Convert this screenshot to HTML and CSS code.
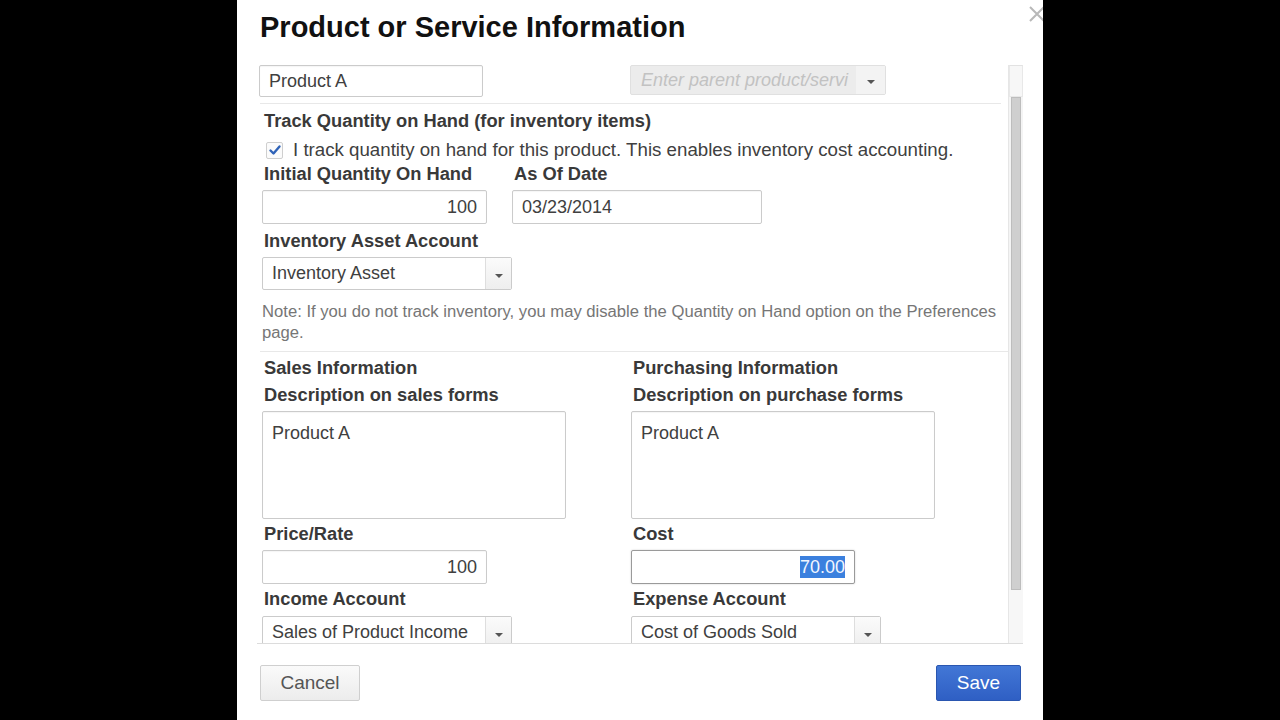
FILE: index.html
```html
<!DOCTYPE html>
<html lang="en">
<head>
<meta charset="utf-8">
<title>Product or Service Information</title>
<link rel="stylesheet" href="styles.css">
</head>
<body>
<div class="dialog">
  <header class="dlg-head">
    <h1 class="dlg-title">Product or Service Information</h1>
    <button class="close" aria-label="Close">
      <svg width="18" height="18" viewBox="0 0 18 18"><path d="M2 2 L16 16 M16 2 L2 16" stroke="#b8b8b8" stroke-width="2" fill="none"/></svg>
    </button>
  </header>

  <div class="scroll-area">
    <div class="content">
      <div class="row-top">
        <div class="field name-field">Product A</div>
        <div class="parent-field">
          <span class="parent-ph">Enter parent product/servi</span>
          <span class="parent-btn"><span class="caret"></span></span>
        </div>
      </div>
      <div class="sep sep-1"></div>

      <div class="label heading-track">Track Quantity on Hand (for inventory items)</div>
      <div class="check-line">
        <span class="checkbox">
          <svg width="14" height="14" viewBox="0 0 14 14"><path d="M2.5 7.5 L5.5 10.5 L11.5 3.5" stroke="#2f63b8" stroke-width="2.4" fill="none" stroke-linecap="round" stroke-linejoin="round"/></svg>
        </span>
        <span class="check-text">I track quantity on hand for this product. This enables inventory cost accounting.</span>
      </div>

      <div class="qty-grid">
        <div class="label">Initial Quantity On Hand</div>
        <div class="label">As Of Date</div>
        <div class="field num qty-input">100</div>
        <div class="field date-input">03/23/2014</div>
      </div>

      <div class="label label-asset">Inventory Asset Account</div>
      <div class="select asset-select">
        <span class="select-text">Inventory Asset</span>
        <span class="select-btn"><span class="caret"></span></span>
      </div>

      <p class="note">Note: If you do not track inventory, you may disable the Quantity on Hand option on the Preferences page.</p>
      <div class="sep sep-2"></div>

      <div class="two-col">
        <div class="col">
          <div class="label sec-head">Sales Information</div>
          <div class="label sub">Description on sales forms</div>
          <div class="field textarea">Product A</div>
          <div class="label lbl-price">Price/Rate</div>
          <div class="field num amount-input">100</div>
          <div class="label lbl-acct">Income Account</div>
          <div class="select acct-select">
            <span class="select-text">Sales of Product Income</span>
            <span class="select-btn"><span class="caret"></span></span>
          </div>
        </div>
        <div class="col">
          <div class="label sec-head">Purchasing Information</div>
          <div class="label sub">Description on purchase forms</div>
          <div class="field textarea">Product A</div>
          <div class="label lbl-price">Cost</div>
          <div class="field num amount-input cost-input focused"><span class="sel">70.00</span></div>
          <div class="label lbl-acct">Expense Account</div>
          <div class="select acct-select">
            <span class="select-text">Cost of Goods Sold</span>
            <span class="select-btn"><span class="caret"></span></span>
          </div>
        </div>
      </div>
    </div>

    <div class="scrollbar">
      <div class="sb-top"></div>
      <div class="sb-thumb"></div>
      <div class="sb-bottom"></div>
    </div>
  </div>

  <footer class="dlg-foot">
    <button class="btn btn-cancel">Cancel</button>
    <button class="btn btn-save">Save</button>
  </footer>
</div>
</body>
</html>
```

FILE: styles.css
```css
* { box-sizing: border-box; }

html, body {
  margin: 0;
  padding: 0;
  height: 100%;
}

body {
  background: #000;
  display: flex;
  justify-content: center;
  font-family: "Liberation Sans", Arial, Helvetica, sans-serif;
  color: #393939;
}

.dialog {
  width: 806px;
  height: 720px;
  background: #fff;
  display: flex;
  flex-direction: column;
  overflow: hidden;
}

/* header */
.dlg-head {
  height: 63px;
  display: flex;
  align-items: flex-start;
  justify-content: space-between;
  padding-left: 23px;
}

.dlg-title {
  margin: 10px 0 0;
  font-size: 29px;
  line-height: 34px;
  font-weight: bold;
  color: #111;
}

.close {
  margin: 4px -6px 0 0;
  padding: 0;
  width: 24px;
  height: 20px;
  border: 0;
  background: transparent;
  display: flex;
  align-items: center;
  justify-content: center;
}

/* scroll area */
.scroll-area {
  height: 581px;
  margin: 0 20px;
  border-bottom: 1px solid #dcdcdc;
  display: flex;
  overflow: hidden;
}

.content {
  flex: 1;
  padding: 2px 0 0 2px;
  overflow: hidden;
}

.scrollbar {
  width: 15px;
  margin-top: 2px;
  display: flex;
  flex-direction: column;
  border-left: 1px solid #e6e6e6;
  background: #f4f4f4;
}
.sb-top {
  height: 32px;
  background: #f7f7f7;
  border: 1px solid #e8e8e8;
  border-top: 1px solid #e2e2e2;
}
.sb-thumb {
  height: 493px;
  margin: 0 2px 0 2px;
  background: #cfcfcf;
  border: 1px solid #bdbdbd;
}
.sb-bottom {
  flex: 1;
  background: #f7f7f7;
}

/* fields */
.field {
  border: 1px solid #cbcbcb;
  border-radius: 2px;
  background: #fff;
  font-size: 18px;
  color: #404040;
  padding: 0 9px;
  display: flex;
  align-items: center;
  white-space: nowrap;
  box-shadow: inset 0 1px 1px rgba(0,0,0,0.04);
}
.field.num { justify-content: flex-end; }

.label {
  font-size: 18.3px;
  line-height: 22px;
  font-weight: bold;
  color: #393939;
  padding-left: 5px;
  white-space: nowrap;
}

.row-top {
  display: flex;
  align-items: flex-start;
}
.name-field {
  width: 224px;
  height: 32px;
}
.parent-field {
  margin-left: 147px;
  width: 256px;
  height: 30px;
  background: #ececec;
  border: 1px solid #e0e0e0;
  border-radius: 2px;
  display: flex;
  align-items: center;
}
.parent-ph {
  flex: 1;
  padding-left: 10px;
  font-size: 18px;
  font-style: italic;
  color: #c2c2c2;
  overflow: hidden;
  white-space: nowrap;
}
.parent-btn {
  width: 29px;
  height: 100%;
  background: #f3f3f3;
  display: flex;
  align-items: center;
  justify-content: center;
  padding-top: 3px;
}

.caret {
  display: block;
  width: 0;
  height: 0;
  border-left: 4px solid transparent;
  border-right: 4px solid transparent;
  border-top: 4px solid #555;
}

.sep {
  height: 1px;
  background: #e8e8e8;
  margin-left: 1px;
}
.sep-1 { margin-top: 6px; width: 741px; }
.sep-2 { margin-top: 8px; width: 748px; }

.heading-track { margin-top: 6px; padding-left: 5px; }

.check-line {
  margin-top: 7px;
  height: 22px;
  display: flex;
  align-items: center;
  padding-left: 7px;
}
.checkbox {
  width: 17px;
  height: 17px;
  border: 1px solid #cfcfcf;
  border-radius: 2px;
  background: #fbfbfb;
  display: flex;
  align-items: center;
  justify-content: center;
  margin-right: 10px;
}
.check-text {
  font-size: 18.7px;
  color: #404040;
  white-space: nowrap;
}

.qty-grid {
  margin-top: 2px;
  display: grid;
  grid-template-columns: 250px 250px;
  row-gap: 5px;
  padding-left: 3px;
}
.qty-grid .label { padding-left: 2px; }
.qty-input { width: 225px; height: 34px; }
.date-input { width: 250px; height: 34px; }

.label-asset { margin-top: 6px; }

.select {
  display: flex;
  align-items: stretch;
  border: 1px solid #cbcbcb;
  border-radius: 2px;
  background: #fff;
  width: 250px;
  height: 33px;
  margin-left: 3px;
}
.select-text {
  flex: 1;
  font-size: 18px;
  color: #404040;
  padding-left: 9px;
  display: flex;
  align-items: center;
  white-space: nowrap;
  overflow: hidden;
}
.select-btn {
  width: 26px;
  border-left: 1px solid #dedede;
  background: linear-gradient(#fbfbfb, #eeeeee);
  display: flex;
  align-items: center;
  justify-content: center;
  padding-top: 4px;
}
.asset-select { margin-top: 5px; }

.note {
  margin: 11px 0 0 3px;
  width: 745px;
  font-size: 16.65px;
  line-height: 21px;
  color: #767676;
}

.two-col {
  display: grid;
  grid-template-columns: 369px 1fr;
  padding-left: 3px;
}
.col .label { padding-left: 2px; }
.sec-head { margin-top: 5px; }
.sub { margin-top: 5px; }
.textarea {
  margin-top: 5px;
  width: 304px;
  height: 108px;
  align-items: flex-start;
  padding-top: 10px;
  line-height: 22px;
}
.lbl-price { margin-top: 4px; }
.amount-input { margin-top: 5px; width: 225px; height: 34px; }
.cost-input { width: 224px; }
.focused {
  border-color: #9a9a9a;
  box-shadow: 0 0 2px rgba(0,0,0,0.2);
}
.sel {
  background: #3b80de;
  color: #f2f6ff;
  line-height: 22px;
}
.lbl-acct { margin-top: 4px; }
.acct-select { margin-top: 6px; margin-left: 0; }

/* footer */
.dlg-foot {
  flex: 1;
  display: flex;
  justify-content: space-between;
  align-items: flex-start;
  padding: 21px 22px 0 23px;
}
.btn {
  height: 36px;
  font-family: "Liberation Sans", Arial, sans-serif;
  font-size: 19px;
  border-radius: 2px;
  padding: 0;
}
.btn-cancel {
  width: 100px;
  color: #555;
  border: 1px solid #cfcfcf;
  background: linear-gradient(#fafafa, #ececec);
}
.btn-save {
  width: 85px;
  color: #fff;
  border: 1px solid #2a56b0;
  background: linear-gradient(#4277d6, #2f5fc4);
}
```
